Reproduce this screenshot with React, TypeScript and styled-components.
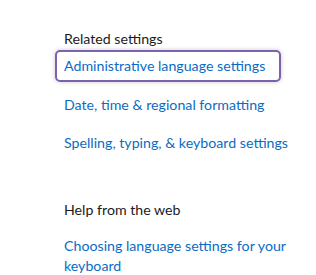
import React from 'react';
import styled, { createGlobalStyle } from 'styled-components';

const GlobalStyle = createGlobalStyle`
  html, body {
    margin: 0;
    padding: 0;
    background: #ffffff;
  }
  body {
    font-family: 'Lato', 'Noto Sans', sans-serif;
    -webkit-font-smoothing: antialiased;
  }
`;

const Page = styled.div`
  width: 316px;
  height: 275px;
  padding: 29px 0 0 55px;
  box-sizing: border-box;
  display: flex;
  flex-direction: column;
  align-items: flex-start;
  overflow: hidden;
`;

const Section = styled.section<{ $gap?: number }>`
  display: flex;
  flex-direction: column;
  align-items: flex-start;
  margin-bottom: ${(p) => p.$gap ?? 0}px;
`;

const Heading = styled.h3<{ $after?: number }>`
  margin: 0 0 ${(p) => p.$after ?? 1}px 9px;
  font-size: 14.2px;
  font-weight: 400;
  line-height: 20px;
  color: #1b1b1b;
`;

const LinkRow = styled.a<{ $focused?: boolean }>`
  display: block;
  width: ${(p) => (p.$focused ? '226px' : 'auto')};
  max-width: 248px;
  box-sizing: border-box;
  padding: 4px 7px;
  margin-bottom: 6.5px;
  border: 2px solid ${(p) => (p.$focused ? '#7c62a8' : 'transparent')};
  border-radius: 5px;
  box-shadow: ${(p) => (p.$focused ? '0 0 4px rgba(80, 60, 120, 0.3)' : 'none')};
  font-size: 14.2px;
  line-height: 20px;
  color: #0b6cc4;
  text-decoration: none;
  white-space: ${(p) => (p.$focused ? 'nowrap' : 'normal')};
  cursor: pointer;
`;

const related = [
  'Administrative language settings',
  'Date, time & regional formatting',
  'Spelling, typing, & keyboard settings',
];

export default function App() {
  return (
    <>
      <GlobalStyle />
      <Page>
        <Section $gap={34.5}>
          <Heading>Related settings</Heading>
          {related.map((t, i) => (
            <LinkRow key={t} $focused={i === 0}>
              {t}
            </LinkRow>
          ))}
        </Section>
        <Section>
          <Heading $after={10}>Help from the web</Heading>
          <LinkRow>Choosing language settings for your keyboard</LinkRow>
        </Section>
      </Page>
    </>
  );
}
